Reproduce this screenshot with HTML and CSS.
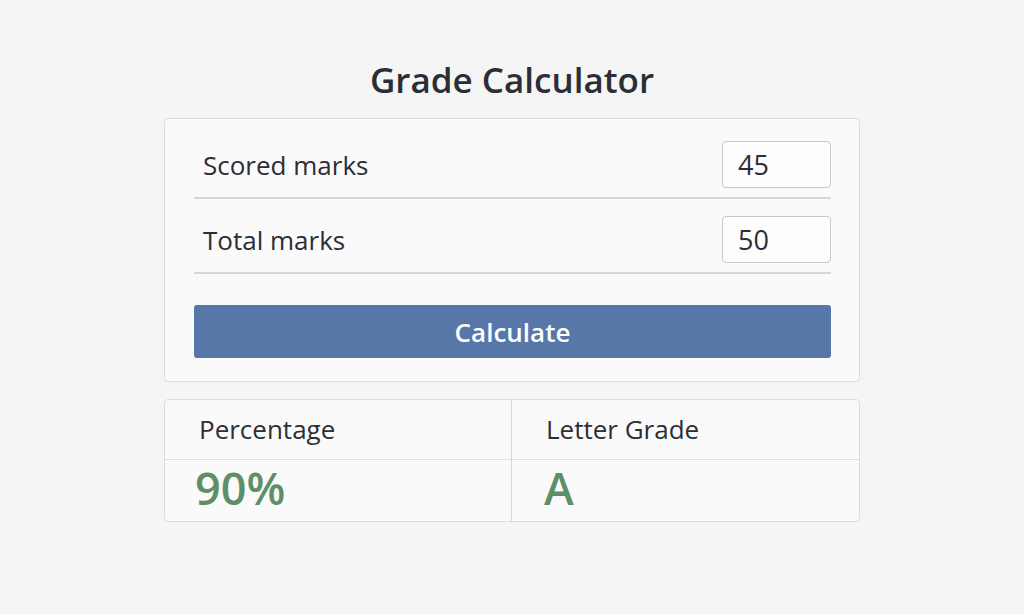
FILE: index.html
```html
<!DOCTYPE html>
<html lang="en">
<head>
<meta charset="utf-8">
<title>Grade Calculator</title>
<link rel="stylesheet" href="styles.css">
</head>
<body>
<main class="page">
  <h1 class="title">Grade Calculator</h1>
  <section class="card form-card">
    <div class="field-row">
      <label class="field-label" for="scored">Scored marks</label>
      <input class="field-input" id="scored" type="text" value="45">
    </div>
    <div class="field-row">
      <label class="field-label" for="total">Total marks</label>
      <input class="field-input" id="total" type="text" value="50">
    </div>
    <button class="calc-btn" type="button">Calculate</button>
  </section>
  <section class="card result-card">
    <div class="result-col">
      <div class="result-head">Percentage</div>
      <div class="result-value">90%</div>
    </div>
    <div class="result-col">
      <div class="result-head">Letter Grade</div>
      <div class="result-value">A</div>
    </div>
  </section>
</main>
</body>
</html>
```

FILE: styles.css
```css
* { box-sizing: border-box; }
html, body { margin: 0; padding: 0; }
body {
  background: #f5f5f5;
  font-family: "Open Sans", "Noto Sans", sans-serif;
  color: #2c2f36;
  width: 1024px;
  height: 614px;
  overflow: hidden;
}
.page {
  width: 696px;
  margin: 0 auto;
  padding-top: 60px;
  display: flex;
  flex-direction: column;
}
.title {
  margin: 0 0 18px;
  height: 40px;
  line-height: 40px;
  font-size: 35px;
  font-weight: 600;
  text-align: center;
  color: #2b2e35;
}
.card {
  background: #fafafa;
  border: 1px solid #dcdcdc;
  border-radius: 4px;
}
.form-card {
  padding: 5px 28px 23px 29px;
  display: flex;
  flex-direction: column;
}
.field-row {
  display: flex;
  align-items: center;
  justify-content: space-between;
  padding: 17px 0 9px;
  border-bottom: 2px solid #d6d6d6;
}
.field-label {
  font-size: 26px;
  font-weight: 500;
  padding-left: 9px;
  color: #2b2e35;
}
.field-input {
  width: 109px;
  height: 47px;
  border: 1px solid #c9c9c9;
  border-radius: 4px;
  background: #fdfdfd;
  font-family: inherit;
  font-size: 27px;
  font-weight: 500;
  color: #2b2e35;
  padding: 0 0 0 15px;
  outline: none;
}
.calc-btn {
  margin-top: 31px;
  height: 53px;
  border: none;
  border-radius: 3px;
  background: #5777a8;
  color: #ffffff;
  font-family: inherit;
  font-size: 26px;
  font-weight: 600;
  cursor: pointer;
}
.result-card {
  margin-top: 17px;
  display: grid;
  grid-template-columns: 346px 1fr;
  height: 123px;
  overflow: hidden;
}
.result-col {
  display: flex;
  flex-direction: column;
  min-height: 0;
}
.result-col + .result-col {
  border-left: 1px solid #d6d6d6;
}
.result-head {
  height: 60px;
  flex: none;
  line-height: 58px;
  border-bottom: 1px solid #dedede;
  padding-left: 34px;
  font-size: 26px;
  font-weight: 500;
}
.result-value {
  height: 61px;
  flex: none;
  display: flex;
  align-items: center;
  line-height: 1;
  padding: 0 0 6px 30px;
  font-size: 45px;
  font-weight: 600;
  color: #5e8f66;
}
.result-col + .result-col .result-value {
  padding-left: 32px;
}
```
